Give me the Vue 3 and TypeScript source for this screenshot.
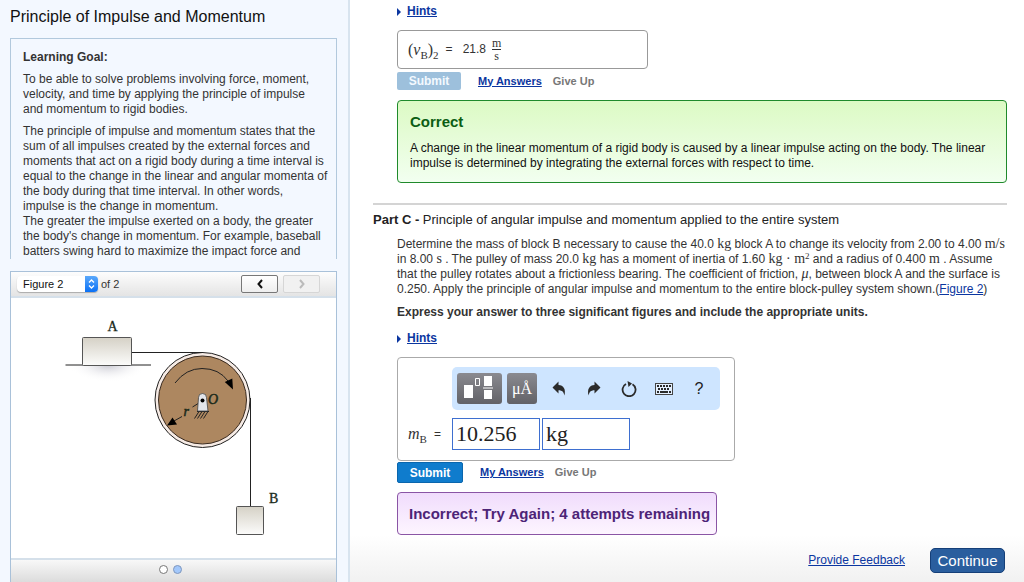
<script setup lang="ts">
import { ref } from 'vue'

const figure = ref('Figure 2')
const mass = ref('10.256')
const unit = ref('kg')
const hatches = [187, 190, 193, 196]
const keyRows = [
  { y: 3, xs: [3, 6, 9, 12, 15] },
  { y: 6, xs: [4, 7, 10, 13] },
]
</script>

<template>
  <div class="page">
    <aside class="side">
      <h1 class="title">Principle of Impulse and Momentum</h1>
      <section class="goal">
        <h2>Learning Goal:</h2>
        <p>
          To be able to solve problems involving force, moment,<br />
          velocity, and time by applying the principle of impulse<br />
          and momentum to rigid bodies.
        </p>
        <p>
          The principle of impulse and momentum states that the<br />
          sum of all impulses created by the external forces and<br />
          moments that act on a rigid body during a time interval is<br />
          equal to the change in the linear and angular momenta of<br />
          the body during that time interval. In other words,<br />
          impulse is the change in momentum.<br />
          The greater the impulse exerted on a body, the greater<br />
          the body's change in momentum. For example, baseball<br />
          batters swing hard to maximize the impact force and
        </p>
      </section>
      <section class="figure">
        <header class="figure-bar">
          <span class="picker">
            <select v-model="figure" aria-label="Figure">
              <option>Figure 1</option>
              <option>Figure 2</option>
            </select>
            <svg class="stepper" viewBox="0 0 13 16" aria-hidden="true">
              <path d="M4 6.5 6.5 4 9 6.5M4 9.5 6.5 12 9 9.5" />
            </svg>
          </span>
          <span class="of">of 2</span>
          <button class="nav" type="button" aria-label="Previous figure">
            <svg viewBox="0 0 8 10"><path d="M6 1 2.5 5 6 9" /></svg>
          </button>
          <button class="nav off" type="button" aria-label="Next figure" disabled>
            <svg viewBox="0 0 8 10"><path d="M2 1 5.5 5 2 9" /></svg>
          </button>
        </header>
        <div class="stage">
          <svg class="drawing" viewBox="0 0 325 260" role="img" aria-label="Block A on a surface joined by a cord over a pulley to hanging block B">
            <defs>
              <linearGradient id="block" x1="0" y1="0" x2="0" y2="1">
                <stop offset="0" stop-color="#d5d1c6" />
                <stop offset="1" stop-color="#fcfcfb" />
              </linearGradient>
              <radialGradient id="shade" cx="0.5" cy="0" r="1" gradientTransform="translate(0.25 0) scale(0.5 1)">
                <stop offset="0" stop-color="#c9c9d2" />
                <stop offset="1" stop-color="#fff" stop-opacity="0" />
              </radialGradient>
            </defs>
            <rect x="58" y="67" width="78" height="17" fill="url(#shade)" />
            <path d="M54.5 67H140" class="line" />
            <rect x="71.5" y="39.5" width="49" height="28" rx="1" class="block" />
            <circle cx="191.5" cy="102" r="47.5" fill="#f6ebe5" stroke="#222" />
            <circle cx="191.5" cy="102" r="44" fill="#ad8760" stroke="#3a2b20" />
            <path d="M121 54.5H192M239.5 100V208" class="line" />
            <rect x="225.5" y="208.5" width="27" height="28" rx="1" class="block" />
            <path d="M164 85Q175 70.5 191 70.5Q208 70.5 217 83" class="line" />
            <path d="M222 91.5 213.8 84 221.3 80.5Z" />
            <path d="M188 105 181.5 109M171 118.5 163 123" class="line" />
            <path d="M156 127.5 161.5 119.5 166 126.5Z" />
            <path v-for="x in hatches" :key="x" :d="`M${x + 1} 113.5l-4.500 7`" class="line" />
            <path d="M186 113.500H198" class="line" />
            <path d="M186.500 113 187.500 99.500A4 4 0 0 1 195.500 99.500L197 113Z" fill="#e3e5ea" stroke="#444" stroke-width="0.8" />
            <circle cx="191.500" cy="102.500" r="2" />
            <text x="96.500" y="32.500">A</text>
            <text x="258" y="205">B</text>
            <text x="172.500" y="117.500" class="it">r</text>
            <text x="197" y="105.500" class="it">O</text>
          </svg>
        </div>
        <footer class="pager">
          <button type="button" aria-label="Show figure 1"></button>
          <button type="button" class="on" aria-label="Show figure 2"></button>
        </footer>
      </section>
    </aside>

    <main class="main">
      <div class="inset">
        <a class="hints" href="#">Hints</a>
        <div class="given">
          <span class="math">(<i>v</i><sub>B</sub>)<sub>2</sub></span>
          <span>=</span>
          <span class="value">21.8</span>
          <span class="frac"><span>m</span><span>s</span></span>
        </div>
        <div class="actions first">
          <button class="submit" type="button" disabled>Submit</button>
          <a href="#">My Answers</a>
          <span>Give Up</span>
        </div>
        <section class="correct">
          <h2>Correct</h2>
          <p>
            A change in the linear momentum of a rigid body is caused by a linear impulse acting on the body. The linear<br />
            impulse is determined by integrating the external forces with respect to time.
          </p>
        </section>
      </div>

      <hr />
      <h2 class="part"><b>Part C -</b> Principle of angular impulse and momentum applied to the entire system</h2>

      <div class="inset">
        <p class="problem">
          Determine the mass of block B necessary to cause the 40.0 <span class="tex">kg</span> block A to change its velocity from 2.00 to 4.00 <span class="tex">m/s</span><br />
          in 8.00 <span class="tex">s</span> . The pulley of mass 20.0 <span class="tex">kg</span> has a moment of inertia of 1.60 <span class="tex">kg · m<sup>2</sup></span> and a radius of 0.400 <span class="tex">m</span> . Assume<br />
          that the pulley rotates about a frictionless bearing. The coefficient of friction, <i class="tex">μ</i>, between block A and the surface is<br />
          0.250. Apply the principle of angular impulse and momentum to the entire block-pulley system shown.(<a href="#">Figure 2</a>)
        </p>
        <p class="express">Express your answer to three significant figures and include the appropriate units.</p>
        <a class="hints" href="#">Hints</a>
        <div class="answer">
          <div class="tools">
            <button class="tool dark wide" type="button" aria-label="Templates">
              <svg viewBox="0 0 45 31">
                <path fill="#fff" d="M7 12h9v13H7zM27 3h8v10h-8zM27 17h8v9h-8zM26 14.500h10v1h-10z" />
                <path fill="none" stroke="#fff" d="M18.500 5.500h4v7h-4z" />
              </svg>
            </button>
            <button class="tool dark" type="button">μÅ</button>
            <button class="tool undo" type="button" aria-label="Undo">
              <svg viewBox="0 0 16 16"><path d="M1.500 6.500 7.500 0.500v3.500c5 .2 7.500 4 6 10.500C12.500 11 11.500 9.300 7.500 9.200V12.500z" /></svg>
            </button>
            <button class="tool" type="button" aria-label="Redo">
              <svg viewBox="0 0 16 16"><path d="M14.500 6.500 8.500 0.500v3.500c-5 .2-7.500 4-6 10.500C3.500 11 4.500 9.300 8.500 9.200V12.500z" /></svg>
            </button>
            <button class="tool" type="button" aria-label="Reset">
              <svg viewBox="0 0 16 16">
                <path d="M11.500 3.200A6.500 6.500 0 1 1 5 3" fill="none" stroke="#2b2b2b" stroke-width="1.800" />
                <path d="M6.500 0 11 2.500 7.500 6Z" />
              </svg>
            </button>
            <button class="tool" type="button" aria-label="Keyboard">
              <svg class="keys" viewBox="0 0 18 12">
                <rect x="0.500" y="0.500" width="17" height="11" fill="#e4f0ff" stroke="#444" />
                <template v-for="row in keyRows" :key="row.y">
                  <rect v-for="x in row.xs" :key="x" :x="x - 1" :y="row.y - 1" width="2" height="2" />
                </template>
                <path d="M5 8h8v2H5zM2 8h2v2H2zM14 8h2v2h-2z" />
              </svg>
            </button>
            <button class="tool help" type="button">?</button>
          </div>
          <div class="entry">
            <label class="math" for="mass"><i>m</i><sub>B</sub></label>
            <span class="eq">=</span>
            <input id="mass" v-model="mass" type="text" />
            <input v-model="unit" type="text" aria-label="Units" />
          </div>
        </div>
        <div class="actions second">
          <button class="submit" type="button">Submit</button>
          <a href="#">My Answers</a>
          <span>Give Up</span>
        </div>
        <p class="incorrect">Incorrect; Try Again; 4 attempts remaining</p>
      </div>

      <footer class="foot">
        <a href="#">Provide Feedback</a>
        <button type="button">Continue</button>
      </footer>
    </main>
  </div>
</template>

<style>
body {
  margin: 0;
}
</style>

<style scoped>
* {
  box-sizing: border-box;
}
.page {
  display: grid;
  grid-template-columns: 350px minmax(0, 1fr);
  height: 100vh;
  overflow: hidden;
  font: 12px/15px "Liberation Sans", Arial, sans-serif;
  color: #333;
}
h1,
h2,
p {
  margin: 0;
}
button {
  font-family: inherit;
  padding: 0;
  border: 0;
}
a {
  color: #0b36a0;
}

.side {
  display: flex;
  flex-direction: column;
  min-height: 0;
  padding: 8px 11px 0 10px;
  background: #f3f8ff;
  border-right: 2px solid #d8e4ef;
}
.title {
  font-size: 16px;
  line-height: 18px;
  font-weight: 400;
  color: #111;
  margin-bottom: 12px;
}
.goal {
  flex: none;
  height: 221px;
  overflow: hidden;
  padding: 11px 12px 0;
  border: 1px solid #b2c9dd;
  border-bottom: 0;
  white-space: nowrap;
}
.goal h2 {
  font-size: 12px;
  line-height: 15px;
}
.goal p {
  margin-top: 7px;
}
.figure {
  flex: 1;
  min-height: 0;
  display: flex;
  flex-direction: column;
  margin-top: 12px;
  border: 1px solid #a9c1d9;
  border-bottom: 0;
  background: #fff;
}
.figure-bar {
  display: flex;
  align-items: center;
  height: 26px;
  padding: 0 16px 0 6px;
  background: linear-gradient(#fdfdfd, #e4e4e4);
  border-bottom: 2px solid #d5e0ea;
}
.picker {
  display: grid;
  width: 81px;
  height: 16px;
  border-radius: 4px;
  overflow: hidden;
  background: #fff;
  box-shadow: 0 1px 1px #aaa;
}
.picker select,
.stepper {
  grid-area: 1 / 1;
}
.picker select {
  appearance: none;
  border: 0;
  padding: 0 0 0 6px;
  background: none;
  font: 11px/16px "Liberation Sans", Arial, sans-serif;
  color: #111;
}
.stepper {
  justify-self: end;
  width: 13px;
  height: 16px;
  background: linear-gradient(#5aa8fb, #0a70f5);
  pointer-events: none;
}
.stepper path {
  fill: none;
  stroke: #fff;
  stroke-width: 1.3;
}
.of {
  margin: 0 auto 0 3px;
  font-size: 11px;
}
.nav {
  display: grid;
  place-items: center;
  width: 37px;
  height: 18px;
  border: 1px solid #777;
  border-radius: 2px;
  background: linear-gradient(#fff, #eee);
}
.nav.off {
  margin-left: 5px;
  border-color: #d6d6d6;
  background: #f1f1f1;
}
.nav svg {
  width: 8px;
  height: 10px;
}
.nav path {
  fill: none;
  stroke: #111;
  stroke-width: 2;
}
.nav.off path {
  stroke: #bbb;
}
.stage {
  flex: 1;
  min-height: 0;
}
.drawing {
  display: block;
  width: 100%;
}
.drawing .line {
  fill: none;
  stroke: #222;
}
.drawing .block {
  fill: url(#block);
  stroke: #555;
}
.drawing text {
  font: 14px "Liberation Serif", "Times New Roman", serif;
  fill: #1a2a1a;
  stroke: #1a2a1a;
  stroke-width: 0.3;
}
.drawing .it {
  font-style: italic;
  stroke-width: 0.5;
}
.pager {
  display: flex;
  justify-content: center;
  gap: 5px;
  height: 24px;
  padding: 5px 6px 0 0;
  border-top: 2px solid #d5e0ea;
  background: linear-gradient(#f8f8f8, #dcdcdc);
}
.pager button {
  width: 9px;
  height: 9px;
  border: 1px solid #777;
  border-radius: 50%;
  background: #fff;
}
.pager .on {
  background: #a3c8fb;
  border-color: #7f97bd;
}

.main {
  display: flex;
  flex-direction: column;
  padding: 4px 17px 0 23px;
  background: linear-gradient(#fff 92%, #f1f1f1);
}
.inset {
  padding-left: 24px;
}
.hints {
  display: flex;
  align-items: center;
  gap: 6px;
  width: max-content;
  font-weight: 700;
}
.hints::before {
  content: "";
  border: 4px solid transparent;
  border-left-color: #0b36a0;
  border-right: 0;
}
.given {
  display: flex;
  align-items: center;
  width: 251px;
  height: 39px;
  margin-top: 11px;
  padding: 0 10px;
  border: 1px solid #999;
  border-radius: 4px;
}
.math {
  font: 16px/18px "Liberation Serif", "Times New Roman", serif;
  margin-right: 7px;
}
.math sub {
  font-size: 11px;
  line-height: 0;
}
.value {
  margin: 0 6px 0 10px;
}
.frac {
  display: grid;
  font: 12px/12px "Liberation Serif", "Times New Roman", serif;
  text-align: center;
}
.frac span:first-child {
  border-bottom: 1px solid #333;
}
.actions {
  display: flex;
  align-items: center;
  gap: 11px;
  font-size: 11px;
  font-weight: 700;
  color: #777;
}
.actions.first {
  margin-top: 3px;
}
.actions.second {
  margin-top: 1px;
}
.submit {
  width: 64px;
  height: 18px;
  margin-right: 6px;
  border-radius: 2px;
  background: #9dc0dc;
  color: #f3f9ff;
  font-size: 12px;
  font-weight: 700;
}
.second .submit {
  width: 66px;
  height: 21px;
  background: #0f7ccd;
  border: 1px solid #0a66ad;
  color: #fff;
}
.correct {
  margin-top: 10px;
  height: 83px;
  padding: 12px;
  border: 1px solid #1f8a2b;
  border-radius: 4px;
  background: linear-gradient(#dcfac4, #f2fff0);
  color: #111;
  white-space: nowrap;
}
.correct h2 {
  font-size: 15px;
  line-height: 18px;
  color: #0b5e13;
}
.correct p {
  margin-top: 10px;
}
hr {
  width: 100%;
  height: 2px;
  margin: 20px 0 7px;
  border: 0;
  background: #d4d4d4;
}
.part {
  font-size: 13px;
  line-height: 15px;
  font-weight: 400;
  color: #222;
  white-space: nowrap;
}
.problem {
  margin-top: 10px;
  white-space: nowrap;
}
.tex {
  font: 14px/14px "Liberation Serif", "Times New Roman", serif;
}
i.tex {
  font-style: italic;
}
.tex sup {
  font-size: 9px;
  line-height: 0;
  vertical-align: 4px;
}
.express {
  margin: 8px 0 11px;
  font-weight: 700;
}
.answer {
  width: 338px;
  margin-top: 11px;
  padding: 9px 14px 10px 10px;
  border: 1px solid #aaa;
  border-radius: 4px;
}
.tools {
  display: flex;
  align-items: center;
  gap: 5px;
  height: 43px;
  margin-left: 44px;
  padding: 0 5px;
  border-radius: 5px;
  background: #cee5ff;
}
.tool {
  display: grid;
  place-items: center;
  width: 30px;
  height: 31px;
  background: none;
  color: #222;
}
.tool svg {
  width: 16px;
  height: 16px;
  fill: #2b2b2b;
}
.tool .keys {
  width: 18px;
  height: 12px;
}
.undo {
  margin-left: 2px;
}
.dark {
  border-radius: 3px;
  background: linear-gradient(#8a8a90, #626267);
  color: #fff;
  font: 16px/20px "Liberation Serif", "Times New Roman", serif;
}
.wide {
  width: 45px;
}
.wide svg {
  width: 45px;
  height: 31px;
}
.help {
  font-size: 16px;
}
.entry {
  display: flex;
  align-items: center;
  margin-top: 8px;
}
.entry .eq {
  width: 18px;
}
.entry input {
  width: 88px;
  height: 32px;
  margin-right: 2px;
  padding: 0 3px;
  border: 1px solid #3e6fd0;
  background: #fff;
  font: 22px/28px "Liberation Serif", "Times New Roman", serif;
  color: #222;
}
.incorrect {
  width: 320px;
  margin-top: 9px;
  padding: 12px 11px;
  border: 1px solid #8a55a5;
  border-radius: 4px;
  background: linear-gradient(#f0dcfc, #fdf5ff);
  color: #4d2477;
  font-size: 15px;
  line-height: 17px;
  font-weight: 700;
  white-space: nowrap;
}
.foot {
  display: flex;
  justify-content: flex-end;
  align-items: center;
  gap: 25px;
  margin-top: 13px;
  padding-right: 2px;
}
.foot button {
  width: 75px;
  height: 25px;
  border: 1px solid #153f78;
  border-radius: 5px;
  background: #2a5e9e;
  color: #fff;
  font-size: 15px;
}
</style>
